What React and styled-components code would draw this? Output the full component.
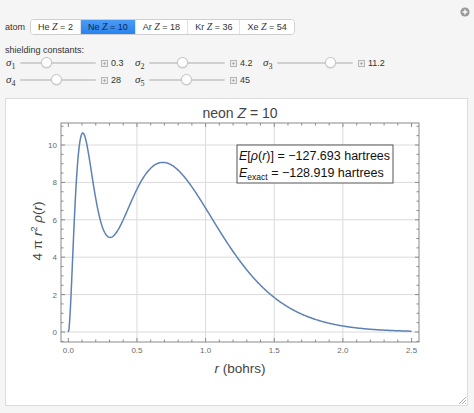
import React, { useState } from 'react'
import styled, { createGlobalStyle } from 'styled-components'

const GlobalStyle = createGlobalStyle`
    body {
        margin: 0;
        background: #f5f5f5;
        font-family: "Liberation Sans", Arial, sans-serif;
    }
`;

const atoms = [
    { sym: 'He', z: 2 },
    { sym: 'Ne', z: 10 },
    { sym: 'Ar', z: 18 },
    { sym: 'Kr', z: 36 },
    { sym: 'Xe', z: 54 },
];

const sliders = [
    { n: 1, value: '0.3', pos: 0.36 },
    { n: 2, value: '4.2', pos: 0.45 },
    { n: 3, value: '11.2', pos: 0.71 },
    { n: 4, value: '28', pos: 0.49 },
    { n: 5, value: '45', pos: 0.5 },
];

// plot mapping (page coordinates)
const X0 = 68.3, XS = 137.3, Y0 = 332, YS = 18.7;
const FL = 61, FR = 419, FT = 123, FB = 342;
const px = r => X0 + r * XS;
const py = v => Y0 - v * YS;

function density(r, Z, s1, s2) {
    const z1 = Z - s1;
    const z2 = (Z - s2) / 2;
    const a = 2 * 4 * z1 * z1 * z1 * r * r * Math.exp(-2 * z1 * r);
    const b = 8 * Math.pow(2 * z2, 5) / 24 * Math.pow(r, 4) * Math.exp(-2 * z2 * r);
    return a + b;
}

function curvePath() {
    const pts = [];
    for (let i = 0; i <= 500; i++) {
        const r = 2.5 * i / 500;
        pts.push(`${px(r).toFixed(2)},${py(density(r, 10, 0.3, 4.2)).toFixed(2)}`);
    }
    return 'M' + pts.join(' L');
}

function Chart() {
    const xTicks = [];
    for (let i = 0; i <= 25; i++) {
        const x = px(i / 10);
        const major = i % 5 === 0;
        const len = major ? 4 : 2.5;
        xTicks.push(<line key={'b' + i} x1={x} x2={x} y1={FB} y2={FB - len} />);
        xTicks.push(<line key={'t' + i} x1={x} x2={x} y1={FT} y2={FT + len} />);
    }
    const yTicks = [];
    for (let i = -1; i <= 22; i++) {
        const y = py(i / 2);
        if (y < FT || y > FB) continue;
        const major = i % 4 === 0;
        const len = major ? 4 : 2.5;
        yTicks.push(<line key={'l' + i} x1={FL} x2={FL + len} y1={y} y2={y} />);
        yTicks.push(<line key={'r' + i} x1={FR} x2={FR - len} y1={y} y2={y} />);
    }
    return (
        <ChartSvg width="461" height="306" viewBox="6 99 461 306">
            <g stroke="#dadada" strokeWidth="1">
                {[0.5, 1, 1.5, 2].map(r => <line key={r} x1={px(r)} x2={px(r)} y1={FT} y2={FB} />)}
                {[0, 2, 4, 6, 8, 10].map(v => <line key={v} x1={FL} x2={FR} y1={py(v)} y2={py(v)} />)}
            </g>
            <path d={curvePath()} fill="none" stroke="#5e81b5" strokeWidth="1.5" />
            <rect x={FL} y={FT} width={FR - FL} height={FB - FT} fill="none" stroke="#8a8a8a" strokeWidth="1" />
            <g stroke="#8a8a8a" strokeWidth="1">
                {xTicks}
                {yTicks}
            </g>
            <g fill="#6a6a6a" fontSize="8" fontFamily="Liberation Sans, Arial, sans-serif">
                {['0.0', '0.5', '1.0', '1.5', '2.0', '2.5'].map((t, i) => (
                    <text key={t} x={px(i * 0.5)} y={353} textAnchor="middle">{t}</text>
                ))}
                {[0, 2, 4, 6, 8, 10].map(v => (
                    <text key={v} x={57} y={py(v) + 3} textAnchor="end">{v}</text>
                ))}
            </g>
            <text x={240} y={118} textAnchor="middle" fontSize="14" fill="#444" fontFamily="Liberation Sans, Arial, sans-serif">
                neon <tspan fontStyle="italic">Z</tspan> = 10
            </text>
            <text x={240} y={373} textAnchor="middle" fontSize="13.5" fill="#444" fontFamily="Liberation Sans, Arial, sans-serif">
                <tspan fontStyle="italic">r</tspan> (bohrs)
            </text>
            <text transform="translate(42,231) rotate(-90)" textAnchor="middle" fontSize="13.5" fill="#444" fontFamily="Liberation Sans, Arial, sans-serif">
                4 π <tspan fontStyle="italic">r</tspan><tspan fontSize="9" dy="-5">2</tspan><tspan dy="5"> </tspan><tspan fontStyle="italic">ρ</tspan>(<tspan fontStyle="italic">r</tspan>)
            </text>
            <rect x={237} y={145} width={156} height={38} fill="#fff" stroke="#555" strokeWidth="1" />
            <g fontSize="12.5" fill="#111" fontFamily="Liberation Sans, Arial, sans-serif">
                <text x={239} y={160}>
                    <tspan fontStyle="italic">E</tspan>[<tspan fontStyle="italic">ρ</tspan>(<tspan fontStyle="italic">r</tspan>)] = −127.693 hartrees
                </text>
                <text x={239} y={177}>
                    <tspan fontStyle="italic">E</tspan><tspan fontSize="8.5" dy="3">exact</tspan><tspan dy="-3"> = −128.919 hartrees</tspan>
                </text>
            </g>
        </ChartSvg>
    );
}

function App() {
    const [atom, setAtom] = useState('Ne');
    return (
        <Page>
            <GlobalStyle />
            <CornerButton>
                <svg width="10" height="10" viewBox="0 0 10 10">
                    <circle cx="5" cy="5" r="4.6" fill="#9a9a9a" />
                    <path d="M5 2.6 V7.4 M2.6 5 H7.4" stroke="#fff" strokeWidth="1.3" />
                </svg>
            </CornerButton>
            <Controls>
                <AtomRow>
                    <SmallLabel>atom</SmallLabel>
                    <ButtonGroup>
                        {atoms.map(a => (
                            <AtomButton key={a.sym} $active={a.sym === atom} onClick={() => setAtom(a.sym)}>
                                {a.sym} <i>Z</i> = {a.z}
                            </AtomButton>
                        ))}
                    </ButtonGroup>
                </AtomRow>
                <SectionLabel>shielding constants:</SectionLabel>
                <SliderGrid>
                    {sliders.map(s => (
                        <SliderControl key={s.n}>
                            <Sigma>σ<sub>{s.n}</sub></Sigma>
                            <Track>
                                <Thumb style={{ left: `${s.pos * 100}%` }} />
                            </Track>
                            <PlusBox>
                                <svg width="7" height="7" viewBox="0 0 7 7">
                                    <rect x="0.5" y="0.5" width="6" height="6" fill="#ededed" stroke="#b5b5b5" />
                                    <path d="M3.5 2 V5 M2 3.5 H5" stroke="#a8a8a8" strokeWidth="0.8" />
                                </svg>
                            </PlusBox>
                            <Value>{s.value}</Value>
                        </SliderControl>
                    ))}
                </SliderGrid>
            </Controls>
            <PlotPanel>
                <Chart />
                <ResizeHandle>
                    <svg width="9" height="9" viewBox="0 0 9 9">
                        <path d="M1 8 L8 1 M4 8 L8 4 M7 8 L8 7" stroke="#9a9a9a" strokeWidth="0.8" />
                    </svg>
                </ResizeHandle>
            </PlotPanel>
        </Page>
    );
}

const Page = styled.div`
    position: relative;
    width: 474px;
    height: 413px;
    box-sizing: border-box;
    padding-top: 19px;
    background: #f5f5f5;
`;

const CornerButton = styled.div`
    position: absolute;
    top: 7px;
    right: 4px;
    width: 10px;
    height: 10px;
    display: flex;
`;

const Controls = styled.div`
    display: flex;
    flex-direction: column;
    padding-left: 5px;
`;

const AtomRow = styled.div`
    display: flex;
    align-items: center;
    gap: 5px;
`;

const SmallLabel = styled.span`
    font-size: 9px;
    color: #333;
`;

const ButtonGroup = styled.div`
    display: flex;
    height: 16px;
    border: 1px solid #cfcfcf;
    border-radius: 4px;
    background: #fff;
    overflow: hidden;
    box-sizing: border-box;
`;

const AtomButton = styled.button`
    border: none;
    border-left: 1px solid #e2e2e2;
    margin: 0;
    padding: 0 7px;
    font-family: "Liberation Sans", Arial, sans-serif;
    font-size: 9px;
    line-height: 14px;
    color: ${p => (p.$active ? '#0d2748' : '#333')};
    background: ${p => (p.$active ? 'linear-gradient(#4a9bf8, #2a83ee)' : '#fff')};
    white-space: nowrap;

    &:first-child {
        border-left: none;
    }

    > i {
        font-family: "Liberation Serif", "Times New Roman", serif;
        font-size: 10px;
    }
`;

const SectionLabel = styled.div`
    margin-top: 10px;
    font-size: 9px;
    line-height: 10px;
    color: #333;
`;

const SliderGrid = styled.div`
    display: grid;
    grid-template-columns: 129px 128px 129px;
    row-gap: 1px;
    padding-left: 1px;
`;

const SliderControl = styled.div`
    display: flex;
    align-items: center;
    height: 16px;
`;

const Sigma = styled.span`
    width: 14px;
    font-family: "Liberation Serif", "Times New Roman", serif;
    font-style: italic;
    font-size: 11px;
    color: #333;

    > sub {
        font-style: normal;
        font-size: 8px;
        vertical-align: -3px;
    }
`;

const Track = styled.div`
    position: relative;
    width: 76px;
    height: 2px;
    background: #d0d0d0;
    border-radius: 1px;
`;

const Thumb = styled.div`
    position: absolute;
    top: -5px;
    width: 11px;
    height: 11px;
    margin-left: -6px;
    border-radius: 50%;
    background: #fff;
    border: 1px solid #c4c4c4;
    box-sizing: border-box;
    box-shadow: 0 0.5px 1px rgba(0, 0, 0, 0.15);
`;

const PlusBox = styled.div`
    display: flex;
    margin-left: 5px;
`;

const Value = styled.span`
    margin-left: 3px;
    font-size: 9px;
    color: #333;
`;

const PlotPanel = styled.div`
    position: relative;
    margin: 10px 0 0 5px;
    width: 463px;
    height: 308px;
    box-sizing: border-box;
    background: #fff;
    border: 1px solid #dcdcdc;
`;

const ChartSvg = styled.svg`
    display: block;
`;

const ResizeHandle = styled.div`
    position: absolute;
    right: 0;
    bottom: 0;
    width: 9px;
    height: 9px;
    display: flex;
`;

export default App;
